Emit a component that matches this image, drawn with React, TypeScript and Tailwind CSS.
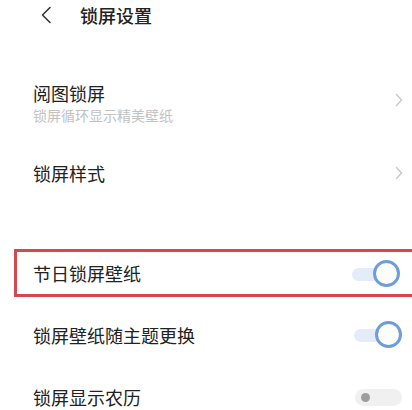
import React from "react";

const font = { fontFamily: '"Noto Sans CJK SC", "Noto Sans", sans-serif' };

const ChevronRight = () => (
  <svg width="8" height="14" viewBox="0 0 8 14" fill="none" className="shrink-0">
    <path d="M1.5 1.5 L6.5 7 L1.5 12.5" stroke="#c9c9c9" strokeWidth="1.4" strokeLinecap="round" strokeLinejoin="round" />
  </svg>
);

const SwitchOn = () => (
  <div className="relative w-[48px] h-[28px] shrink-0">
    <div className="absolute left-0 top-[8px] w-[36px] h-[13px] rounded-full bg-[#e3ecf8]" />
    <div className="absolute right-0 top-0 w-[27px] h-[27px] rounded-full border-[3px] border-[#6f9dd9] bg-[#fdfdfb]" />
  </div>
);

const SwitchOff = () => (
  <div className="w-[47px] h-[17px] rounded-full bg-[#f0f0f0] flex items-center pl-[6px] shrink-0">
    <div className="w-[9px] h-[9px] rounded-full bg-[#9d9d9d]" />
  </div>
);

export default function App() {
  return (
    <div className="w-[412px] h-[410px] bg-white overflow-hidden text-[#222]" style={font}>
      {/* Header */}
      <div className="flex items-center h-[30px] pl-[40px]">
        <svg width="12" height="18" viewBox="0 0 12 18" fill="none">
          <path d="M10 1.5 L2.5 9 L10 16.5" stroke="#333" strokeWidth="1.6" strokeLinecap="round" strokeLinejoin="round" />
        </svg>
        <span className="ml-[28px] text-[18px] font-medium leading-none">锁屏设置</span>
      </div>

      {/* Navigation items */}
      <div className="mt-[52px] flex items-center justify-between pl-[33px] pr-[9px]">
        <div className="flex flex-col">
          <span className="text-[18px] leading-[22px]">阅图锁屏</span>
          <span className="text-[14px] leading-[16px] mt-[3px] text-[#c2c2c2]">锁屏循环显示精美壁纸</span>
        </div>
        <div className="mt-[-6px]"><ChevronRight /></div>
      </div>

      <div className="mt-[37px] flex items-center justify-between pl-[33px] pr-[9px] h-[26px]">
        <span className="text-[18px] leading-[22px]">锁屏样式</span>
        <ChevronRight />
      </div>

      {/* Toggles */}
      <div className="mt-[63px] ml-[14px] w-[410px] h-[48px] border-[3px] border-r-0 border-[#d64751] flex items-center pl-[16px]">
        <span className="text-[18px] leading-[22px] flex-1">节日锁屏壁纸</span>
        <div className="mr-[24px] mt-[1px]"><SwitchOn /></div>
      </div>

      <div className="mt-[14px] h-[48px] flex items-center justify-between pl-[33px] pr-[10px]">
        <span className="text-[18px] leading-[22px]">锁屏壁纸随主题更换</span>
        <SwitchOn />
      </div>

      <div className="mt-[14px] h-[48px] flex items-center justify-between pl-[33px] pr-[10px]">
        <span className="text-[18px] leading-[22px]">锁屏显示农历</span>
        <SwitchOff />
      </div>
    </div>
  );
}
